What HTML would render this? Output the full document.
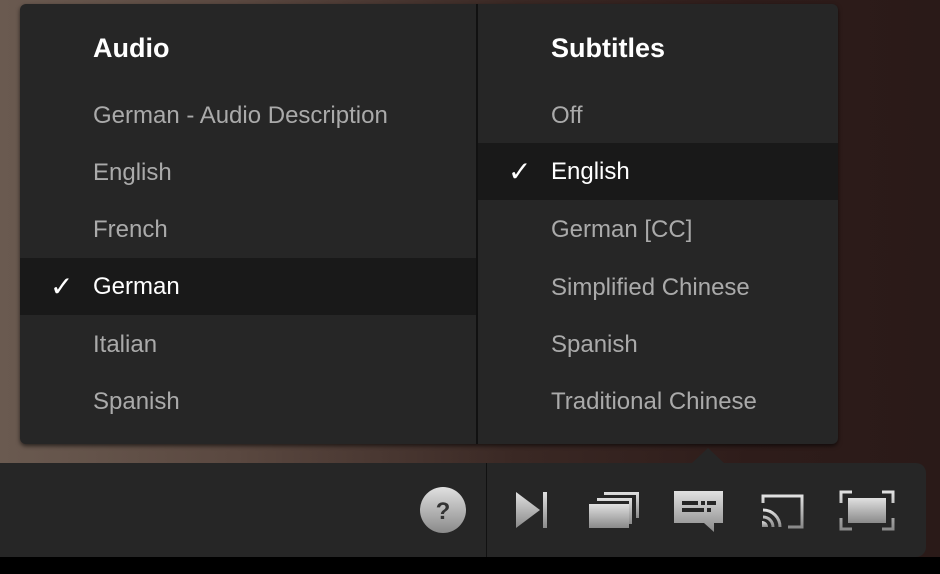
<!DOCTYPE html>
<html><head><style>
*{margin:0;padding:0;box-sizing:border-box}
body{width:940px;height:574px;overflow:hidden;background:#000;font-family:"Liberation Sans",sans-serif;position:relative}
.bg{position:absolute;left:0;top:0;width:940px;height:557px;background:linear-gradient(90deg,#6a5a50 0%,#5a4840 25%,#3a2824 55%,#2e1c1a 80%,#2a1a18 100%)}
.panel{position:absolute;left:20px;top:4px;width:818px;height:440px;background:#262626;border-radius:6px;box-shadow:0 2px 4px rgba(0,0,0,.6);overflow:hidden}
.col{position:absolute;top:0;height:440px}
.div{position:absolute;left:456px;top:0;width:2px;height:440px;background:#111}
.h{position:absolute;font-weight:bold;font-size:27px;color:#fff}
.it{position:absolute;left:0;right:0;height:57px;font-size:24px;color:#aaa;line-height:57px}
.it span{position:absolute}
.sel{background:#191919;color:#fff}
.ck{font-size:28px}
.bar{position:absolute;left:0;top:463px;width:926px;height:94px;background:#262626;border-radius:0 10px 10px 0}
.bdiv{position:absolute;left:486px;top:463px;width:1px;height:94px;background:#111}
.ptr{position:absolute;left:692px;top:448px;width:0;height:0;border-left:16px solid transparent;border-right:16px solid transparent;border-bottom:15px solid #262626}
</style></head><body>
<div class="bg"></div>
<div class="panel">
 <div class="col" style="left:0;width:456px">
  <div class="h" style="left:73px;top:29px">Audio</div>
  <div class="it" style="top:83px"><span style="left:73px">German - Audio Description</span></div>
  <div class="it" style="top:140px"><span style="left:73px">English</span></div>
  <div class="it" style="top:197px"><span style="left:73px">French</span></div>
  <div class="it sel" style="top:254px"><span class="ck" style="left:30px">✓</span><span style="left:73px">German</span></div>
  <div class="it" style="top:312px"><span style="left:73px">Italian</span></div>
  <div class="it" style="top:369px"><span style="left:73px">Spanish</span></div>
 </div>
 <div class="div"></div>
 <div class="col" style="left:458px;width:360px">
  <div class="h" style="left:73px;top:29px">Subtitles</div>
  <div class="it" style="top:83px"><span style="left:73px">Off</span></div>
  <div class="it sel" style="top:139px"><span class="ck" style="left:30px">✓</span><span style="left:73px">English</span></div>
  <div class="it" style="top:197px"><span style="left:73px">German [CC]</span></div>
  <div class="it" style="top:255px"><span style="left:73px">Simplified Chinese</span></div>
  <div class="it" style="top:312px"><span style="left:73px">Spanish</span></div>
  <div class="it" style="top:369px"><span style="left:73px">Traditional Chinese</span></div>
 </div>
</div>
<div class="ptr"></div>
<div class="bar"></div>
<div class="bdiv"></div>
<svg style="position:absolute;left:0;top:463px" width="940" height="94">
<defs><linearGradient id="g" x1="0" y1="0" x2="0" y2="1"><stop offset="0" stop-color="#e0e0e0"/><stop offset="1" stop-color="#8a8a8a"/></linearGradient></defs>
<circle cx="443" cy="47" r="23" fill="url(#g)"/>
<text x="443" y="56" text-anchor="middle" font-family="Liberation Sans" font-weight="bold" font-size="24" fill="#333">?</text>
<polygon points="516,29 540,47 516,65" fill="url(#g)"/>
<rect x="543" y="29" width="4" height="36" fill="url(#g)"/>
<path d="M604,29 H639 V55 H636 V32 H604Z" fill="url(#g)"/>
<path d="M597,35 H632 V61 H629 V38 H597Z" fill="url(#g)"/>
<rect x="589" y="41" width="40" height="24" fill="url(#g)"/>
<path d="M674,28 H723 V60 H714 V69 L704,60 H674Z" fill="url(#g)"/>
<rect x="682" y="38" width="16" height="4" fill="#262626"/><rect x="701" y="38" width="4" height="4" fill="#262626"/><rect x="707" y="38" width="9" height="4" fill="#262626"/>
<rect x="682" y="45" width="22" height="4" fill="#262626"/><rect x="707" y="45" width="4" height="4" fill="#262626"/>
<path d="M763,40 V33 H802 V64 H788" fill="none" stroke="url(#g)" stroke-width="3"/>
<path d="M763,47 A17,17 0 0 1 780,64 M763,54 A10,10 0 0 1 773,64" fill="none" stroke="url(#g)" stroke-width="3"/>
<path d="M762,58 A6,6 0 0 1 768,64 H762Z" fill="url(#g)"/>
<path d="M841,40 V29 H852 M882,29 H893 V40 M893,55 V66 H882 M852,66 H841 V55" fill="none" stroke="url(#g)" stroke-width="3"/>
<rect x="848" y="35" width="38" height="25" fill="url(#g)"/>
</svg>
</body></html>
